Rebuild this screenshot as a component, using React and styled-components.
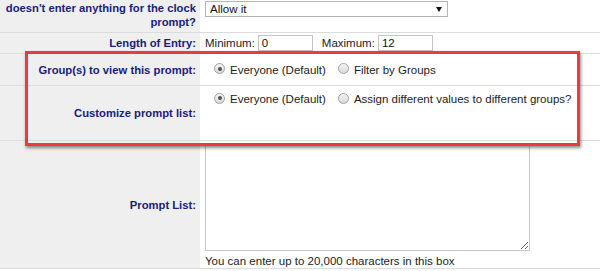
import React from 'react';
import styled, { createGlobalStyle } from 'styled-components';

const GlobalStyle = createGlobalStyle`
  html, body {
    margin: 0;
    padding: 0;
    background: #fff;
  }
  body {
    width: 600px;
    height: 271px;
    overflow: hidden;
    font-family: "Liberation Sans", Arial, sans-serif;
    font-size: 11.5px;
    color: #222;
  }
`;

const Page = styled.div`
  position: relative;
  width: 600px;
  height: 271px;
  overflow: hidden;
`;

const Form = styled.div`
  margin-top: -16px;
`;

const Row = styled.div`
  box-sizing: border-box;
  display: grid;
  grid-template-columns: 200px 1fr;
  height: ${props => props.$height}px;
  border-bottom: 1px solid #dcdcdc;
`;

const Label = styled.div`
  display: flex;
  align-items: center;
  justify-content: flex-end;
  padding-right: 4px;
  background: #efefef;
  color: #1a1d7a;
  font-size: 11.25px;
  font-weight: 700;
  line-height: 14px;
  text-align: right;
  white-space: nowrap;
`;

const Value = styled.div`
  display: flex;
  flex-direction: column;
  justify-content: ${props => (props.$top ? 'flex-start' : 'center')};
  padding: ${props => (props.$top ? `${props.$top}px` : '0')} 0 0 5px;
  line-height: 14px;
`;

const SelectWrap = styled.div`
  position: relative;
  width: 243px;
  height: 16px;
  margin-top: 2px;
`;

const Select = styled.select`
  appearance: none;
  width: 100%;
  height: 100%;
  margin: 0;
  padding: 0 0 0 4px;
  border: 1px solid #b5b5b5;
  border-radius: 0;
  background: #fff;
  color: #111;
  font: inherit;
  line-height: 14px;
`;

const Arrow = styled.span`
  position: absolute;
  right: 6px;
  top: 6px;
  width: 0;
  height: 0;
  border-left: 3.5px solid transparent;
  border-right: 3.5px solid transparent;
  border-top: 5px solid #111;
  pointer-events: none;
`;

const Inline = styled.div`
  display: flex;
  align-items: center;
  gap: 9px;
`;

const Pair = styled.label`
  display: inline-flex;
  align-items: center;
  gap: 3px;
`;

const TextInput = styled.input`
  box-sizing: border-box;
  width: 55px;
  height: 16px;
  margin: 0;
  padding: 0 3px;
  border: 1px solid #c4c4c4;
  font: inherit;
  color: #111;
`;

const RadioGroup = styled.div`
  display: flex;
  align-items: center;
  gap: 12px;
  padding-left: 9px;
`;

const Option = styled.label`
  display: inline-flex;
  align-items: center;
  gap: 5px;
`;

const Radio = styled.span`
  position: relative;
  box-sizing: border-box;
  width: 11px;
  height: 11px;
  margin-top: -2px;
  border: 1px solid #a3a3a3;
  border-radius: 50%;
  background: linear-gradient(#f4f4f4, #d9d9d9);

  ${props => props.$checked && `
    &::after {
      content: '';
      position: absolute;
      left: 2.5px;
      top: 2.5px;
      width: 4px;
      height: 4px;
      border-radius: 50%;
      background: #505050;
    }
  `}
`;

const TextArea = styled.textarea`
  box-sizing: border-box;
  width: 325px;
  height: 108px;
  margin: 0;
  border: 1px solid #c8c8c8;
  font: inherit;
`;

const Hint = styled.div`
  margin-top: 3px;
  color: #222;
`;

const Highlight = styled.div`
  position: absolute;
  left: 25px;
  top: 51px;
  width: 555px;
  height: 95px;
  box-sizing: border-box;
  border: 3px solid #ee3a3f;
  box-shadow: 1px 2px 3px rgba(0, 0, 0, 0.45);
  pointer-events: none;
`;

const RadioChoice = ({ options }) => (
  <RadioGroup>
    {options.map((option, i) => (
      <Option key={option}>
        <Radio $checked={i === 0} />
        {option}
      </Option>
    ))}
  </RadioGroup>
);

export default function App() {
  return (
    <Page>
      <GlobalStyle />
      <Form>
        <Row $height={49}>
          <Label>
            <span>
              What happens if the employee<br />
              doesn't enter anything for the clock<br />
              prompt?
            </span>
          </Label>
          <Value>
            <SelectWrap>
              <Select defaultValue="allow">
                <option value="allow">Allow it</option>
                <option value="block">Don't allow it</option>
              </Select>
              <Arrow />
            </SelectWrap>
          </Value>
        </Row>

        <Row $height={21}>
          <Label>Length of Entry:</Label>
          <Value>
            <Inline>
              <Pair>Minimum: <TextInput defaultValue="0" /></Pair>
              <Pair>Maximum: <TextInput defaultValue="12" /></Pair>
            </Inline>
          </Value>
        </Row>

        <Row $height={32}>
          <Label>Group(s) to view this prompt:</Label>
          <Value>
            <RadioChoice options={['Everyone (Default)', 'Filter by Groups']} />
          </Value>
        </Row>

        <Row $height={55}>
          <Label>Customize prompt list:</Label>
          <Value $top={6}>
            <RadioChoice options={['Everyone (Default)', 'Assign different values to different groups?']} />
          </Value>
        </Row>

        <Row $height={128}>
          <Label>Prompt List:</Label>
          <Value $top={2}>
            <TextArea />
            <Hint>You can enter up to 20,000 characters in this box</Hint>
          </Value>
        </Row>
      </Form>
      <Highlight />
    </Page>
  );
}
